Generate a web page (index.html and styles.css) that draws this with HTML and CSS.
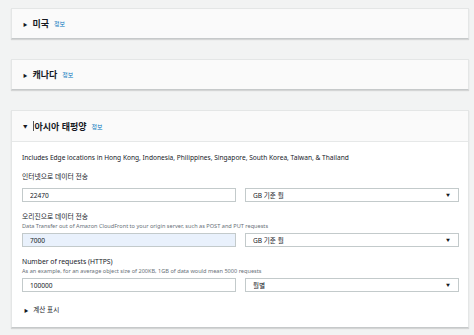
FILE: index.html
```html
<!DOCTYPE html>
<html lang="ko">
<head>
<meta charset="UTF-8" />
<meta name="viewport" content="width=device-width, initial-scale=1.0">
<title>CloudFront 요금 계산</title>
<link rel="stylesheet" href="styles.css">
</head>
<body>
  <div class="region">
    <div class="region-head">
      <span class="arrow">&#9654;</span>
      <span class="region-name">미국</span>
      <a class="info" href="#">정보</a>
    </div>
  </div>

  <div class="region">
    <div class="region-head">
      <span class="arrow">&#9654;</span>
      <span class="region-name">캐나다</span>
      <a class="info" href="#">정보</a>
    </div>
  </div>

  <div class="region open">
    <div class="region-head">
      <span class="arrow">&#9660;</span>
      <span class="caret"></span>
      <span class="region-name">아시아 태평양</span>
      <a class="info" href="#">정보</a>
    </div>
    <div class="region-body">
      <p class="note">Includes Edge locations in Hong Kong, Indonesia, Philippines, Singapore, South Korea, Taiwan, &amp; Thailand</p>

      <div class="field">
        <div class="label">인터넷으로 데이터 전송</div>
        <div class="row">
          <input class="num" type="text" value="22470">
          <div class="select"><span>GB 기준 월</span><span class="down">&#9660;</span></div>
        </div>
      </div>

      <div class="field">
        <div class="label">오리진으로 데이터 전송</div>
        <div class="hint">Data Transfer out of Amazon CloudFront to your origin server, such as POST and PUT requests</div>
        <div class="row">
          <input class="num active" type="text" value="7000">
          <div class="select"><span>GB 기준 월</span><span class="down">&#9660;</span></div>
        </div>
      </div>

      <div class="field">
        <div class="label">Number of requests (HTTPS)</div>
        <div class="hint">As an example, for an average object size of 200KB, 1GB of data would mean 5000 requests</div>
        <div class="row">
          <input class="num" type="text" value="100000">
          <div class="select"><span>월별</span><span class="down">&#9660;</span></div>
        </div>
      </div>

      <div class="calc"><span class="arrow">&#9654;</span> 계산 표시</div>
    </div>
  </div>
</body>
</html>
```

FILE: styles.css
```css
body {
  margin: 0;
  padding: 8px 5px 0 11px;
  background: #f2f3f3;
  font-family: "Noto Sans", "Noto Sans CJK KR", sans-serif;
  color: #16191f;
}
.region {
  background: #fafafa;
  border: 1px solid #e4e6e6;
  border-bottom-color: #c6c9ca;
  box-shadow: 0 1px 1px rgba(0, 0, 0, 0.12);
  margin-bottom: 20px;
}
.region-head {
  height: 29px;
  display: flex;
  align-items: center;
  padding-left: 11px;
}
.open .region-head {
  height: 30px;
  border-bottom: 1px solid #e6e8e8;
}
.arrow {
  font-size: 4.5px;
  margin-right: 5px;
}
.caret {
  width: 1px;
  height: 10px;
  background: #555;
  margin-right: 1px;
}
.region-name {
  font-size: 9px;
  font-weight: bold;
  margin-right: 5px;
}
.info {
  font-size: 6px;
  color: #0073bb;
  text-decoration: none;
}
.region-body {
  background: #fff;
  padding: 11px 9px 12px 10px;
}
.note {
  margin: 0;
  font-size: 6.6px;
  line-height: 10px;
}
.field {
  margin-top: 10px;
}
.field:first-of-type {
  margin-top: 9px;
}
.label {
  font-size: 6.8px;
  line-height: 10px;
  margin-bottom: 6px;
}
.label + .hint {
  margin-top: -6px;
}
.hint {
  font-size: 5.6px;
  line-height: 9px;
  color: #687078;
  margin-bottom: 2px;
}
.row {
  display: grid;
  grid-template-columns: 1fr 1fr;
  column-gap: 9px;
  height: 14px;
}
.num, .select {
  box-sizing: border-box;
  display: block;
  height: 14px;
  border: 1px solid #c3cacb;
  background: #fff;
  font-family: inherit;
  font-size: 6.6px;
  color: #16191f;
  padding: 0 7px;
  margin: 0;
  border-radius: 0;
}
.num.active {
  background: #e9f1fc;
}
.select {
  display: flex;
  align-items: center;
  justify-content: space-between;
}
.down {
  font-size: 4px;
  margin-right: 1px;
}
.calc {
  margin-top: 13px;
  padding-left: 2px;
  font-size: 6.6px;
  line-height: 10px;
}
.calc .arrow {
  margin-right: 3px;
}
```
